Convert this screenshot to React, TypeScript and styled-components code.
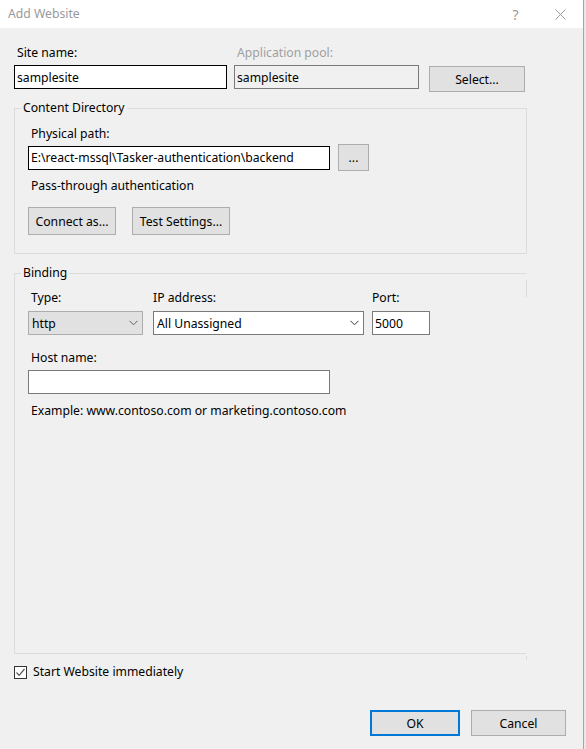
import React from "react";
import styled, { createGlobalStyle } from "styled-components";

const Global = createGlobalStyle`
  html, body { margin: 0; padding: 0; background: #e8e8e8; }
  body { font-family: "Noto Sans", "Open Sans", sans-serif; font-size: 12.2px; color: #000; }
  * { box-sizing: border-box; }
`;

const Window = styled.div`
  width: 584px;
  height: 749px;
  background: #f0f0f0;
  border-right: 1px solid #a6a6a6;
  display: flex;
  flex-direction: column;
`;

const TitleBar = styled.div`
  height: 28px;
  background: #fff;
  display: flex;
  align-items: center;
  padding-left: 8px;
  flex-shrink: 0;
`;

const Title = styled.div`
  color: #999;
  font-size: 12.2px;
  flex: 1;
  margin-top: -1px;
`;

const TitleBtn = styled.div<{ $w: number }>`
  width: ${(p) => p.$w}px;
  height: 28px;
  display: flex;
  align-items: center;
  justify-content: center;
  color: #999;
  font-size: 14px;
`;

const Body = styled.div`
  flex: 1;
  display: flex;
  flex-direction: column;
  padding: 17px 0 0 14px;
`;

const TopGrid = styled.div`
  display: grid;
  grid-template-columns: 213px 185px 96px;
  column-gap: 7px;
  row-gap: 4px;
  align-items: start;
`;

const Label = styled.div<{ $disabled?: boolean; $indent?: number }>`
  line-height: 16px;
  height: 16px;
  padding-left: ${(p) => p.$indent ?? 3}px;
  color: ${(p) => (p.$disabled ? "#a0a0a0" : "#000")};
  white-space: nowrap;
`;

const TextBox = styled.div<{ $w: number; $focus?: boolean; $ro?: boolean }>`
  width: ${(p) => p.$w}px;
  height: 24px;
  border: 1px solid ${(p) => (p.$focus ? "#000" : "#7a7a7a")};
  background: ${(p) => (p.$ro ? "#f0f0f0" : "#fff")};
  display: flex;
  align-items: center;
  padding-left: 2px;
  white-space: nowrap;
  overflow: hidden;
`;

const Button = styled.div<{ $w: number; $h?: number; $default?: boolean }>`
  width: ${(p) => p.$w}px;
  height: ${(p) => p.$h ?? 26}px;
  background: #e1e1e1;
  border: ${(p) => (p.$default ? "2px solid #0078d7" : "1px solid #adadad")};
  display: flex;
  align-items: center;
  justify-content: center;
  white-space: nowrap;
  flex-shrink: 0;
`;

const GroupBox = styled.fieldset<{ $h: number; $pt: number; $gap?: boolean }>`
  width: 513px;
  height: ${(p) => p.$h}px;
  margin: 0;
  padding: ${(p) => p.$pt}px 0 0 13px;
  border: 1px solid #dcdcdc;
  ${(p) => (p.$gap ? "border-right-color: transparent;" : "")}
  position: relative;
  min-width: 0;
`;

const RightStub = styled.div<{ $top: number; $h: number }>`
  position: absolute;
  right: -1px;
  top: ${(p) => p.$top}px;
  width: 1px;
  height: ${(p) => p.$h}px;
  background: #dcdcdc;
`;

const Legend = styled.legend`
  margin-left: -7px;
  padding: 0 2px;
  line-height: 16px;
`;

const Row = styled.div<{ $gap: number; $mt?: number; $align?: string }>`
  display: flex;
  gap: ${(p) => p.$gap}px;
  margin-top: ${(p) => p.$mt ?? 0}px;
  align-items: ${(p) => p.$align ?? "center"};
`;

const Col = styled.div<{ $gap?: number; $mt?: number; $ml?: number }>`
  display: flex;
  flex-direction: column;
  gap: ${(p) => p.$gap ?? 5}px;
  margin-top: ${(p) => p.$mt ?? 0}px;
  margin-left: ${(p) => p.$ml ?? 0}px;
`;

const Select = styled.div<{ $w: number; $gray?: boolean }>`
  width: ${(p) => p.$w}px;
  height: 24px;
  border: 1px solid ${(p) => (p.$gray ? "#adadad" : "#7a7a7a")};
  background: ${(p) => (p.$gray ? "#e1e1e1" : "#fff")};
  display: flex;
  align-items: center;
  padding: 0 4px 0 3px;
  justify-content: space-between;
`;

const Note = styled.div<{ $mt: number }>`
  margin-top: ${(p) => p.$mt}px;
  line-height: 16px;
  padding-left: 3px;
`;

const Spacer = styled.div<{ $h?: number; $w?: number }>`
  height: ${(p) => p.$h ?? 0}px;
  width: ${(p) => p.$w ?? 0}px;
  flex-shrink: 0;
`;

const CheckRow = styled.label`
  display: flex;
  align-items: center;
  gap: 6px;
  margin-top: 10px;
  line-height: 16px;
`;

const CheckBox = styled.div`
  width: 13px;
  height: 13px;
  border: 1px solid #333;
  background: #fff;
  display: flex;
  align-items: center;
  justify-content: center;
`;

const Footer = styled.div`
  display: flex;
  justify-content: flex-end;
  gap: 11px;
  padding-right: 17px;
  margin-top: 30px;
`;

const Chevron = ({ color }: { color: string }) => (
  <svg width="9" height="6" viewBox="0 0 9 6">
    <path d="M0.5 0.8 L4.5 4.8 L8.5 0.8" fill="none" stroke={color} strokeWidth="1" />
  </svg>
);

export default function App() {
  return (
    <>
      <Global />
      <Window>
        <TitleBar>
          <Title>Add Website</Title>
          <TitleBtn $w={45}>?</TitleBtn>
          <TitleBtn $w={45}>
            <svg width="11" height="11" viewBox="0 0 11 11">
              <path d="M0.5 0.5 L10.5 10.5 M10.5 0.5 L0.5 10.5" stroke="#999" strokeWidth="1" />
            </svg>
          </TitleBtn>
        </TitleBar>
        <Body>
          <TopGrid>
            <Label>Site name:</Label>
            <Label $disabled>Application pool:</Label>
            <div />
            <TextBox $w={213} $focus>samplesite</TextBox>
            <TextBox $w={185} $ro>samplesite</TextBox>
            <Button $w={96} $h={26} style={{ marginLeft: 3, marginTop: 1 }}>
              Select...
            </Button>
          </TopGrid>

          <Spacer $h={8} />

          <GroupBox $h={154} $pt={10}>
            <Legend>Content Directory</Legend>
            <Label>Physical path:</Label>
            <Row $gap={8} $mt={2}>
              <TextBox $w={302} $focus>E:\react-mssql\Tasker-authentication\backend</TextBox>
              <Button $w={31} $h={27}>...</Button>
            </Row>
            <Note $mt={7}>Pass-through authentication</Note>
            <Row $gap={16} $mt={13}>
              <Button $w={88} $h={28}>Connect as...</Button>
              <Button $w={98} $h={28}>Test Settings...</Button>
            </Row>
          </GroupBox>

          <Spacer $h={11} />

          <GroupBox $h={389} $pt={9} $gap>
            <Legend>Binding</Legend>
            <RightStub $top={-1} $h={17} />
            <RightStub $top={375} $h={4} />
            <Row $gap={10} $align="flex-start">
              <Col>
                <Label>Type:</Label>
                <Select $w={115} $gray>
                  <span>http</span>
                  <Chevron color="#606060" />
                </Select>
              </Col>
              <Col>
                <Label $indent={0}>IP address:</Label>
                <Select $w={211}>
                  <span>All Unassigned</span>
                  <Chevron color="#333" />
                </Select>
              </Col>
              <Col $ml={-2}>
                <Label $indent={0}>Port:</Label>
                <TextBox $w={58}>5000</TextBox>
              </Col>
            </Row>
            <Col $mt={15} $gap={4}>
              <Label>Host name:</Label>
              <TextBox $w={302} />
            </Col>
            <Note $mt={9}>Example: www.contoso.com or marketing.contoso.com</Note>
          </GroupBox>

          <CheckRow>
            <CheckBox>
              <svg width="11" height="11" viewBox="0 0 11 11">
                <path d="M1.5 5.5 L4.2 8.3 L9.5 2" fill="none" stroke="#555" strokeWidth="1.2" />
              </svg>
            </CheckBox>
            <span>Start Website immediately</span>
          </CheckRow>

          <Footer>
            <Button $w={90} $h={26} $default>OK</Button>
            <Button $w={95} $h={26}>Cancel</Button>
          </Footer>
        </Body>
      </Window>
    </>
  );
}
